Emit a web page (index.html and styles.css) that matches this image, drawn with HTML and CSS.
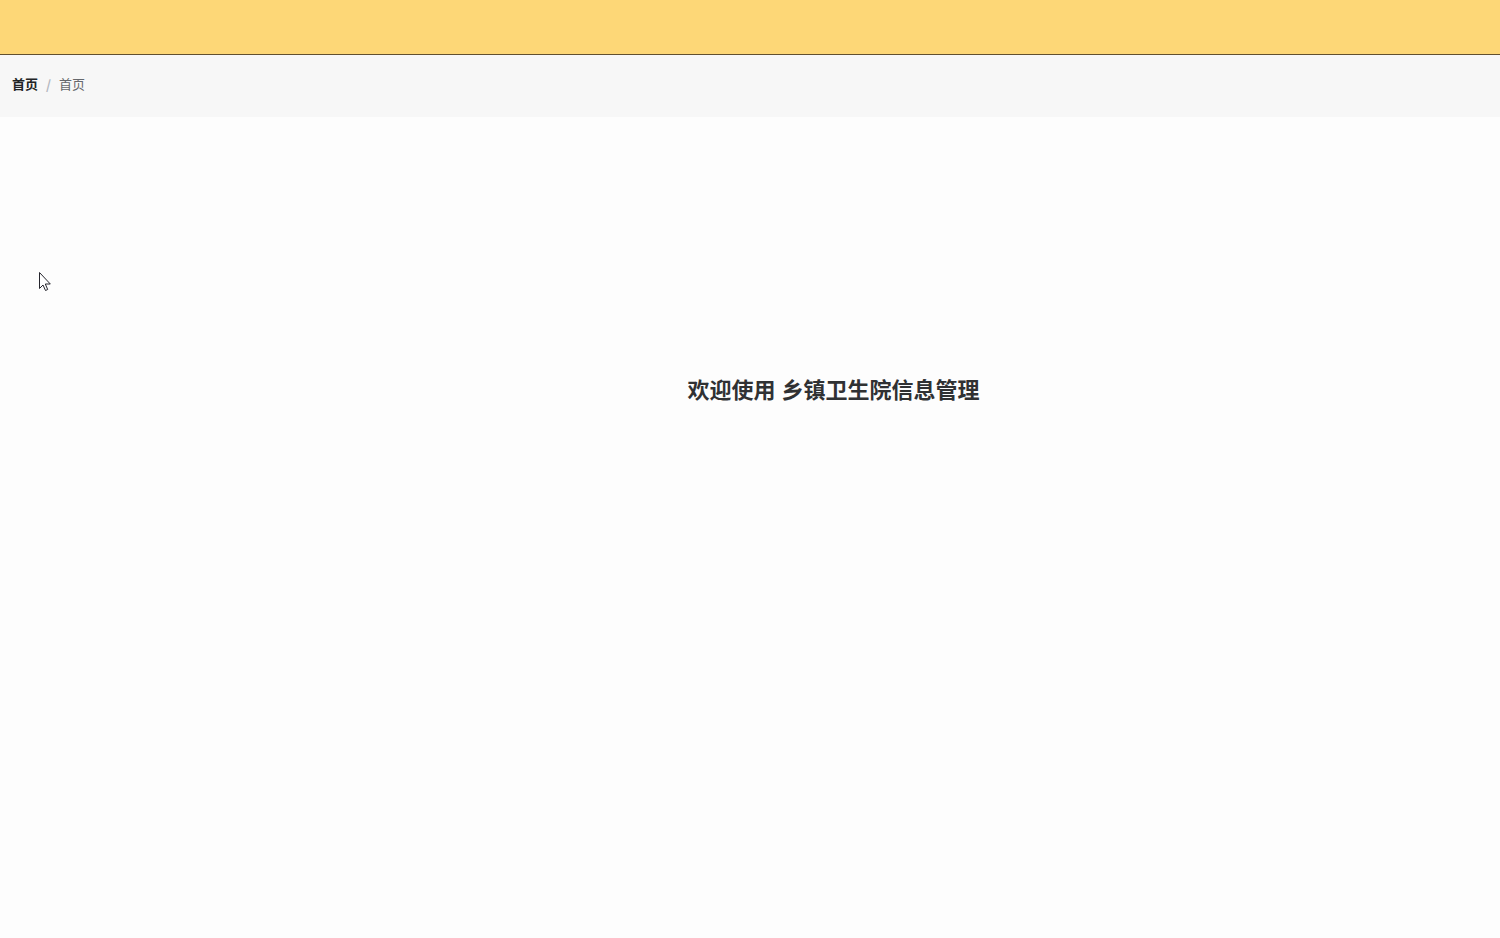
FILE: index.html
```html
<!DOCTYPE html>
<html lang="zh-CN">
<head>
<meta charset="utf-8">
<title>乡镇卫生院信息管理</title>
<link rel="stylesheet" href="styles.css">
</head>
<body>
<header class="topbar"></header>
<nav class="breadcrumb" aria-label="面包屑">
  <a class="crumb-link" href="#">首页</a>
  <span class="crumb-separator">/</span>
  <span class="crumb-current">首页</span>
</nav>
<main class="content">
  <h1 class="welcome">欢迎使用 乡镇卫生院信息管理</h1>
</main>
<svg class="pointer" width="14" height="21" viewBox="0 0 14 21" aria-hidden="true">
  <path d="M1.5 1.5V17.5L5 14L7.5 19.5L9.7 18.5L7.3 13H12.3Z" fill="#fff" stroke="#25252d" stroke-width="1"/>
</svg>
</body>
</html>
```
FILE: styles.css
```css
* {
  box-sizing: border-box;
}

body {
  margin: 0;
  min-height: 100vh;
  display: flex;
  flex-direction: column;
  background: #fdfdfd;
  color: #303133;
  font-family: "Liberation Sans", "Noto Sans CJK SC", sans-serif;
}

.topbar {
  height: 55px;
  background: #fdd777;
  border-bottom: 1px solid #61502f;
}

.breadcrumb {
  display: flex;
  align-items: center;
  gap: 8px;
  padding: 20px 12px 22px;
  background: #f7f7f7;
  font-size: 13px;
  line-height: 20px;
}

.crumb-link {
  color: #222426;
  font-weight: 700;
  text-decoration: none;
}

.crumb-separator {
  color: #b4b8c0;
  font-family: "Noto Sans CJK SC", sans-serif;
  font-weight: 700;
}

.crumb-current {
  color: #66686c;
}

.content {
  flex: 1;
  padding: 258px 0 0 167px;
}

.welcome {
  margin: 0;
  font-size: 22px;
  line-height: 32px;
  font-weight: 700;
  text-align: center;
}

.pointer {
  position: absolute;
  left: 38px;
  top: 271px;
}
```
